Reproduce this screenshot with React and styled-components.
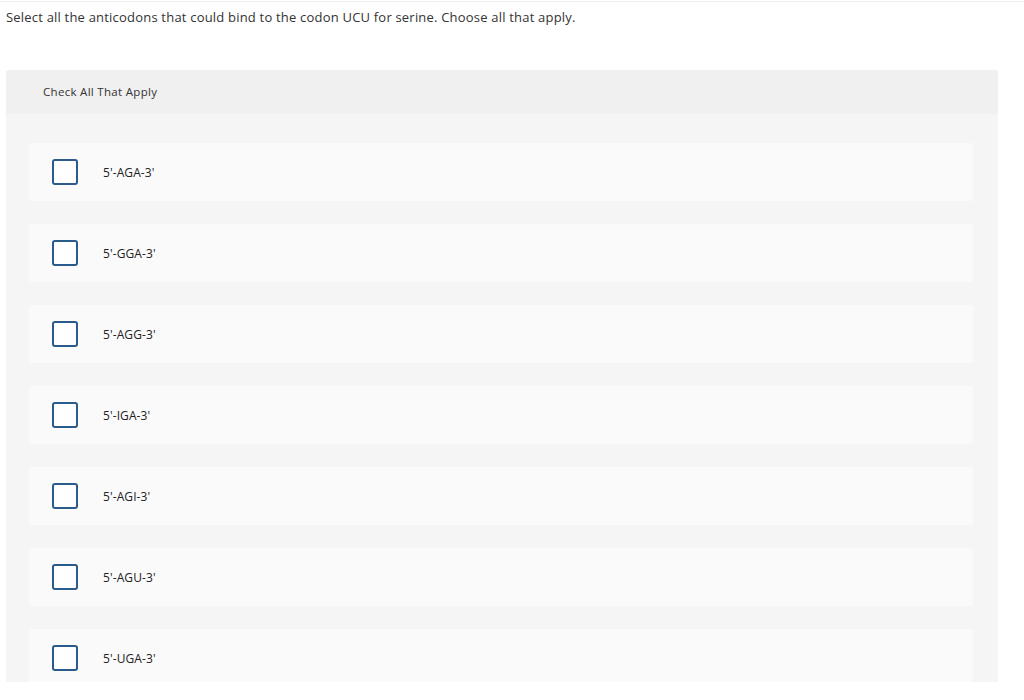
import React from "react";
import styled, { createGlobalStyle } from "styled-components";

const GlobalStyle = createGlobalStyle`
  html, body {
    margin: 0;
    padding: 0;
    background: #ffffff;
  }
  body {
    font-family: "Open Sans", "Liberation Sans", sans-serif;
    color: #333333;
  }
`;

const options = [
  "5'-AGA-3'",
  "5'-GGA-3'",
  "5'-AGG-3'",
  "5'-IGA-3'",
  "5'-AGI-3'",
  "5'-AGU-3'",
  "5'-UGA-3'",
];

const App = () => {
  return (
    <>
      <GlobalStyle />
      <Page>
        <Question>
          Select all the anticodons that could bind to the codon UCU for
          serine. Choose all that apply.
        </Question>
        <Panel>
          <PanelHeader>Check All That Apply</PanelHeader>
          <OptionList>
            {options.map((label) => (
              <Option key={label}>
                <Box />
                <OptionLabel>{label}</OptionLabel>
              </Option>
            ))}
          </OptionList>
        </Panel>
      </Page>
    </>
  );
};

export default App;

const Page = styled.div`
  height: 681px;
  overflow: hidden;
  border-top: 1px solid #f0f0f0;
  margin-top: 1px;
  padding: 0 26px 0 6px;
  box-sizing: border-box;
`;

const Question = styled.p`
  margin: 0;
  padding-top: 6px;
  font-size: 13px;
  line-height: 18px;
  color: #333333;
  letter-spacing: 0.2px;
`;

const Panel = styled.div`
  margin-top: 44px;
  background: #f5f5f5;
  border-radius: 3px 3px 0 0;
`;

const PanelHeader = styled.div`
  height: 44px;
  display: flex;
  align-items: center;
  padding-left: 37px;
  padding-bottom: 1px;
  box-sizing: border-box;
  background: #f0f0f0;
  border-radius: 3px 3px 0 0;
  font-size: 11.5px;
  letter-spacing: 0.3px;
  color: #333333;
`;

const OptionList = styled.div`
  display: flex;
  flex-direction: column;
  gap: 23px;
  padding: 29px 25px 40px 23px;
`;

const Option = styled.div`
  height: 58px;
  display: flex;
  align-items: center;
  background: #fafafa;
  border-radius: 3px;
  padding-left: 23px;
`;

const Box = styled.span`
  width: 22px;
  height: 22px;
  border: 2px solid #2b5b8b;
  border-radius: 3px;
  background: #ffffff;
  flex-shrink: 0;
`;

const OptionLabel = styled.span`
  margin-left: 25px;
  font-size: 12px;
  letter-spacing: 0.1px;
  color: #222222;
`;
